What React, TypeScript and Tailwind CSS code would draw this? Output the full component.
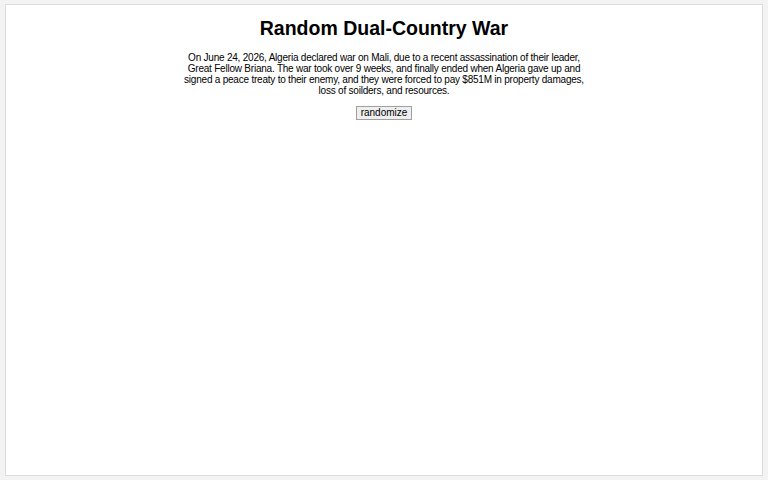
export default function App() {
  return (
    <div className="h-[480px] w-[768px] bg-[#f3f3f3] p-[4px_5px_4px_5px]" style={{ fontFamily: '"Liberation Sans", Arial, sans-serif' }}>
      <div className="flex h-[472px] flex-col items-center border border-[#dcdcdc] bg-white">
        <h1 className="mt-[11px] text-[19.5px] font-bold leading-[24px] text-black">Random Dual-Country War</h1>
        <p className="mt-[12px] w-[404px] text-center text-[10px] leading-[11px] tracking-[-0.22px] text-black">
          On June 24, 2026, Algeria declared war on Mali, due to a recent assassination of their leader, Great Fellow Briana. The war took over 9 weeks, and finally ended when Algeria gave up and signed a peace treaty to their enemy, and they were forced to pay $851M in property damages, loss of soilders, and resources.
        </p>
        <button className="mt-[10px] border border-[#a0a0a0] bg-[#efefef] px-[4px] text-[10px] leading-[12px] text-black">randomize</button>
      </div>
    </div>
  );
}
